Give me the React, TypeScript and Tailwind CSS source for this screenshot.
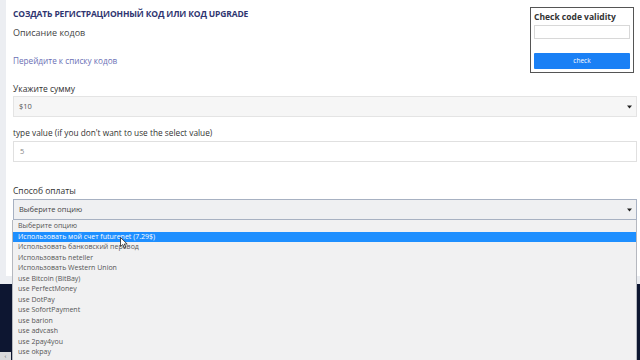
import React from "react";

const methods = [
  "Выберите опцию",
  "Использовать мой счет futurenet (7.29$)",
  "Использовать банковский перевод",
  "Использовать neteller",
  "Использовать Western Union",
  "use Bitcoin (BitBay)",
  "use PerfectMoney",
  "use DotPay",
  "use SofortPayment",
  "use barion",
  "use advcash",
  "use 2pay4you",
  "use okpay",
];

function Caret() {
  return (
    <svg width="5" height="4" viewBox="0 0 5 4" className="shrink-0">
      <path d="M0 0.5 L5 0.5 L2.5 3.5 Z" fill="#222" />
    </svg>
  );
}

export default function App() {
  return (
    <div
      className="relative h-[360px] w-[640px] overflow-hidden bg-[#0d1631]"
      style={{ fontFamily: '"Open Sans", "Noto Sans", sans-serif' }}
    >
      <div className="h-[284px] bg-[#eceef2] pl-[6px]">
        <div className="relative flex h-[276px] flex-col bg-white pl-[7px] pr-[3px]">
          <h1 className="mt-[7px] h-[14px] text-[8.5px] font-bold uppercase leading-[14px] tracking-[-0.15px] text-[#2f3570]">
            Создать регистрационный код или код upgrade
          </h1>
          <p className="mt-[5px] h-[14px] text-[9px] leading-[14px] text-[#444]">Описание кодов</p>
          <a className="mt-[14px] h-[14px] text-[8.2px] leading-[14px] text-[#6b70b5]">Перейдите к списку кодов</a>

          <label className="mt-[14px] h-[14px] text-[8.5px] leading-[14px] text-[#333]">Укажите сумму</label>
          <div className="flex h-[21px] items-center justify-between border border-[#e4e4e4] bg-[#f6f6f6] pl-[5px] pr-[4px] text-[7.5px] text-[#555]">
            <span>$10</span>
            <Caret />
          </div>

          <label className="mt-[9px] h-[14px] text-[8.3px] leading-[14px] text-[#333]">
            type value (if you don't want to use the select value)
          </label>
          <div className="mt-[1px] flex h-[21px] items-center border border-[#e0e0e0] bg-white pl-[6px] text-[7.5px] text-[#888]">
            5
          </div>

          <label className="mt-[22px] h-[14px] text-[8.5px] leading-[14px] text-[#333]">Способ оплаты</label>
          <div className="mt-[1px] flex h-[21px] items-center justify-between border border-[#a7b1c2] bg-[#eff0f2] pl-[5px] pr-[4px] text-[7.5px] text-[#444]">
            <span>Выберите опцию</span>
            <Caret />
          </div>

          <div className="absolute right-[6px] top-[7px] flex h-[66px] w-[104px] flex-col border-[1.5px] border-[#555] bg-white px-[3px]">
            <div className="mt-[3px] text-[8.5px] font-bold leading-[12px] text-[#333]">Check code validity</div>
            <div className="mt-[2px] h-[14px] border border-[#d8d8d8] bg-white" />
            <button className="mt-[14px] h-[16px] w-full rounded-[1px] bg-[#1a80f5] text-[6.5px] leading-[16px] text-white">
              check
            </button>
          </div>
        </div>
      </div>

      <div className="absolute left-[12px] top-[220px] h-[142px] w-[625px] border-x border-[#b5b8bf] bg-[#f1f1f2] pt-[1px] text-[7px] text-[#555]">
        {methods.map((m, i) => (
          <div
            key={m}
            className={
              i === 1
                ? "h-[10.5px] bg-[#1e8fff] pl-[5px] leading-[10.5px] text-white"
                : "h-[10.5px] pl-[5px] leading-[10.5px]"
            }
          >
            {m}
          </div>
        ))}
        <svg width="8" height="12" viewBox="0 0 8 12" className="absolute left-[107px] top-[17px]">
          <path d="M0.5 0.5 L0.5 9.5 L2.8 7.5 L4.4 11 L5.8 10.4 L4.3 7 L7.2 7 Z" fill="#fff" stroke="#222" strokeWidth="0.8" />
        </svg>
      </div>

      <div className="absolute bottom-0 left-0 h-[8px] w-[11px] bg-[#d9dadd] text-center text-[6px] leading-[8px] text-[#555]">‹</div>
    </div>
  );
}
